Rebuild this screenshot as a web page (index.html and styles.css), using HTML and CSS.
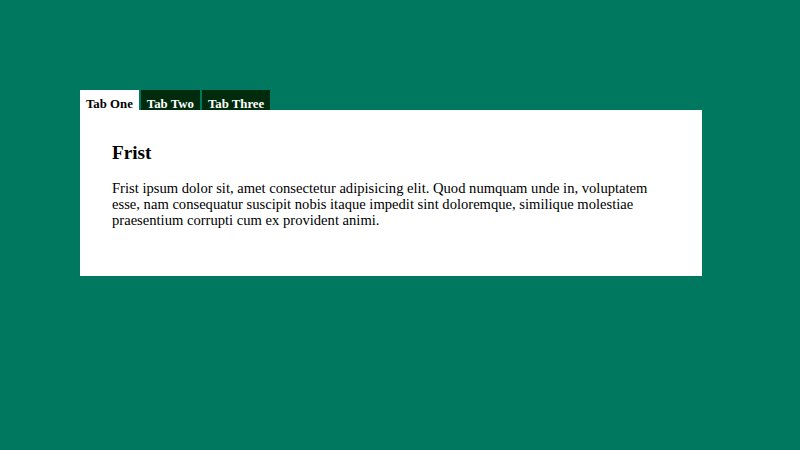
FILE: index.html
```html
<!DOCTYPE html>
<html lang="en">
<head>
<meta charset="utf-8">
<title>Tabs</title>
<link rel="stylesheet" href="styles.css">
</head>
<body>
<div class="tabs">
  <div class="tab-bar">
    <span class="tab active">Tab One</span>
    <span class="tab">Tab Two</span>
    <span class="tab">Tab Three</span>
  </div>
  <div class="panel">
    <h2 class="panel-title">Frist</h2>
    <p class="panel-text">Frist ipsum dolor sit, amet consectetur adipisicing elit. Quod numquam unde in, voluptatem esse, nam consequatur suscipit nobis itaque impedit sint doloremque, similique molestiae praesentium corrupti cum ex provident animi.</p>
  </div>
</div>
</body>
</html>
```
FILE: styles.css
```css
html, body {
  margin: 0;
  padding: 0;
}
body {
  background: #00775f;
  font-family: "Liberation Serif", "Times New Roman", serif;
  color: #000;
  height: 450px;
}
.tabs {
  width: 622px;
  margin: 0 0 0 80px;
  padding-top: 90px;
}
.tab-bar {
  display: flex;
  gap: 2px;
}
.tab {
  display: block;
  box-sizing: border-box;
  height: 20px;
  line-height: 14px;
  padding: 7px 6px 0;
  font-size: 12.8px;
  font-weight: bold;
  background: #002b0c;
  color: #fff;
}
.tab.active {
  background: #fff;
  color: #000;
}
.panel {
  background: #fff;
  padding: 32px 32px 48px;
}
.panel-title {
  margin: 0 0 16px;
  font-size: 19.2px;
  line-height: 22px;
  font-weight: bold;
}
.panel-text {
  margin: 0;
  font-size: 14.6px;
  line-height: 16px;
  width: 558px;
}
```
